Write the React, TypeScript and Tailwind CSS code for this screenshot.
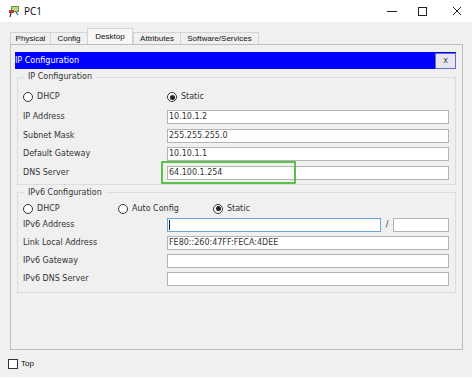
const ui = { fontFamily: '"DejaVu Sans", Verdana, sans-serif' };

function Radio({ on, label, className = "" }: { on?: boolean; label: string; className?: string }) {
  return (
    <div className={`flex items-center gap-[4px] h-[14px] ${className}`}>
      <span className="w-[10px] h-[10px] rounded-full border border-[#333] bg-white flex items-center justify-center">
        {on && <span className="w-[5px] h-[5px] rounded-full bg-[#222]" />}
      </span>
      <span>{label}</span>
    </div>
  );
}

function Field({ label, value, focus, children }: { label: string; value?: string; focus?: boolean; children?: React.ReactNode }) {
  return (
    <div className="flex items-center h-[14px]">
      <span className="w-[144px] shrink-0">{label}</span>
      <div
        className={`h-[14px] flex-1 bg-white border flex items-center pl-[1px] leading-none ${
          focus ? "border-[#6aa3e0]" : "border-[#b4b4b4]"
        }`}
      >
        {focus ? <span className="w-px h-[10px] bg-[#222]" /> : value}
      </div>
      {children}
    </div>
  );
}

const tabs = ["Physical", "Config", "Desktop", "Attributes", "Software/Services"];
const tabW = ["w-[41px]", "w-[38px]", "w-[46px]", "w-[48px]", "w-[79px]"];

export default function App() {
  return (
    <div className="w-[474px] h-[379px] bg-white overflow-hidden">
      <div className="w-[472px] h-[377px] bg-[#f0f0f0] flex flex-col">
        {/* title bar */}
        <div className="h-[22px] bg-white flex items-center shrink-0" style={{ fontFamily: '"Noto Sans", sans-serif' }}>
          <svg width="13" height="13" viewBox="0 0 13 13" className="ml-[8px]">
            <rect x="3" y="1" width="8" height="6" fill="#6a9a3a" />
            <rect x="4" y="2" width="6" height="4" fill="#b8d88a" />
            <rect x="1" y="5" width="5" height="3" fill="#c0392b" />
            <path d="M3 8 L2 12" stroke="#333" strokeWidth="1.2" />
            <path d="M8 7 L10 10" stroke="#2a5db0" strokeWidth="1.2" />
          </svg>
          <span className="ml-[3px] text-[10px] text-[#111]">PC1</span>
          <div className="ml-auto flex items-center h-full">
            <span className="w-[10px] h-px bg-[#222] mr-[21px]" />
            <span className="w-[9px] h-[9px] border border-[#222] mr-[25px]" />
            <svg width="10" height="10" viewBox="0 0 10 10" className="mr-[10px]">
              <path d="M1 1 L9 9 M9 1 L1 9" stroke="#222" strokeWidth="1" />
            </svg>
          </div>
        </div>

        <div className="px-[10px] flex flex-col flex-1" style={ui}>
          {/* tabs */}
          <div className="flex items-end h-[22px] pt-[6px] text-[8px] text-[#111]" style={{ fontFamily: '"Liberation Sans", Arial, sans-serif' }}>
            {tabs.map((t, i) => (
              <div
                key={t}
                className={`${tabW[i]} flex items-center justify-center border border-b-0 border-[#d4d4d4] ${
                  i === 2 ? "h-[16px] bg-[#f7f7f7] border-[#cfcfcf]" : "h-[12px] bg-[#f0f0f0]"
                } ${i > 0 && i !== 3 ? "-ml-px" : ""}`}
              >
                {t}
              </div>
            ))}
          </div>

          {/* panel */}
          <div className="w-[453px] h-[306px] border border-[#bdbdbd] pt-[7px] pl-[4px] text-[8px] text-[#333] relative">
            <div className="w-[441px] h-[17px] bg-[#0000ff] flex items-center">
              <span className="text-white">IP Configuration</span>
              <div className="ml-auto w-[21px] h-[16px] bg-[#e6e6ee] border border-[#6a6ac8] flex items-center justify-center text-[#444]">
                x
              </div>
            </div>

            <fieldset className="ml-[2px] w-[439px] border border-[#dcdcdc] mt-[3px] px-[5px] pb-[4px]">
              <legend className="ml-[1px] px-[4px] leading-[10px]">IP Configuration</legend>
              <div className="flex mt-[8px]">
                <Radio label="DHCP" className="w-[144px]" />
                <Radio on label="Static" />
              </div>
              <div className="flex flex-col gap-[4.67px] mt-[6px] pr-px">
                <Field label="IP Address" value="10.10.1.2" />
                <Field label="Subnet Mask" value="255.255.255.0" />
                <Field label="Default Gateway" value="10.10.1.1" />
                <Field label="DNS Server" value="64.100.1.254" />
              </div>
            </fieldset>

            <fieldset className="ml-[2px] w-[439px] border border-[#dcdcdc] mt-[3px] px-[5px] pb-[6px]">
              <legend className="ml-[1px] px-[4px] leading-[10px]">IPv6 Configuration</legend>
              <div className="flex mt-[4px]">
                <Radio label="DHCP" className="w-[95px]" />
                <Radio label="Auto Config" className="w-[95px]" />
                <Radio on label="Static" />
              </div>
              <div className="flex flex-col gap-[4px] mt-[2px] pr-px">
                <Field label="IPv6 Address" focus>
                  <span className="w-[12px] text-center">/</span>
                  <div className="w-[56px] h-[14px] bg-white border border-[#b4b4b4]" />
                </Field>
                <Field label="Link Local Address" value="FE80::260:47FF:FECA:4DEE" />
                <Field label="IPv6 Gateway" value="" />
                <Field label="IPv6 DNS Server" value="" />
              </div>
            </fieldset>

            {/* annotation highlight */}
            <div className="absolute left-[150px] top-[116px] w-[135px] h-[23px] border-[2.5px] border-[#5ac24a] rounded-[1px]" />
          </div>

          {/* bottom */}
          <div className="flex items-center gap-[3px] mt-[8px] -ml-[2px] text-[8px] text-[#111]" style={{ fontFamily: '"Liberation Sans", Arial, sans-serif' }}>
            <span className="w-[10px] h-[10px] border border-[#333] bg-white" />
            <span>Top</span>
          </div>
        </div>
      </div>
    </div>
  );
}
